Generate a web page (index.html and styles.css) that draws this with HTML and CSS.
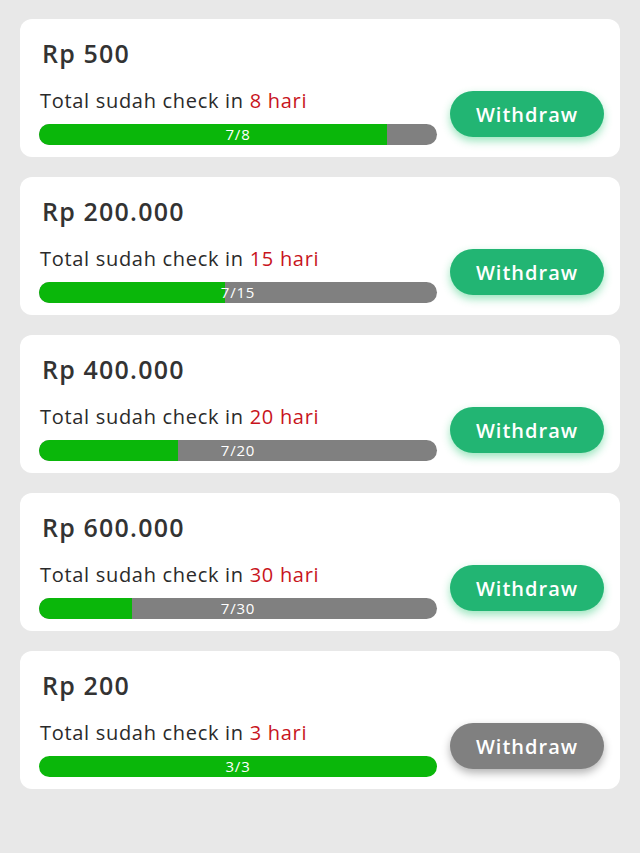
FILE: index.html
```html
<!DOCTYPE html>
<html lang="id">
<head>
    <meta charset="UTF-8">
    <meta name="viewport" content="width=device-width, initial-scale=1.0">
    <title>Check In Reward</title>
    <link rel="stylesheet" href="styles.css">
</head>
<body>
    <div class="reward-list">
        <div class="reward-card">
            <div class="reward-info">
                <div class="reward-amount">Rp 500</div>
                <div class="reward-desc">Total sudah check in <span class="days">8 hari</span></div>
                <div class="progress">
                    <div class="progress-fill" style="width: 87.5%"></div>
                    <span class="progress-text">7/8</span>
                </div>
            </div>
            <button class="withdraw-btn">Withdraw</button>
        </div>

        <div class="reward-card">
            <div class="reward-info">
                <div class="reward-amount">Rp 200.000</div>
                <div class="reward-desc">Total sudah check in <span class="days">15 hari</span></div>
                <div class="progress">
                    <div class="progress-fill" style="width: 46.67%"></div>
                    <span class="progress-text">7/15</span>
                </div>
            </div>
            <button class="withdraw-btn">Withdraw</button>
        </div>

        <div class="reward-card">
            <div class="reward-info">
                <div class="reward-amount">Rp 400.000</div>
                <div class="reward-desc">Total sudah check in <span class="days">20 hari</span></div>
                <div class="progress">
                    <div class="progress-fill" style="width: 35%"></div>
                    <span class="progress-text">7/20</span>
                </div>
            </div>
            <button class="withdraw-btn">Withdraw</button>
        </div>

        <div class="reward-card">
            <div class="reward-info">
                <div class="reward-amount">Rp 600.000</div>
                <div class="reward-desc">Total sudah check in <span class="days">30 hari</span></div>
                <div class="progress">
                    <div class="progress-fill" style="width: 23.33%"></div>
                    <span class="progress-text">7/30</span>
                </div>
            </div>
            <button class="withdraw-btn">Withdraw</button>
        </div>

        <div class="reward-card">
            <div class="reward-info">
                <div class="reward-amount">Rp 200</div>
                <div class="reward-desc">Total sudah check in <span class="days">3 hari</span></div>
                <div class="progress">
                    <div class="progress-fill" style="width: 100%"></div>
                    <span class="progress-text">3/3</span>
                </div>
            </div>
            <button class="withdraw-btn disabled">Withdraw</button>
        </div>
    </div>
</body>
</html>
```

FILE: styles.css
```css
body {
    margin: 0;
    padding: 19px 20px;
    background-color: #e8e8e8;
    font-family: 'Open Sans', 'DejaVu Sans', sans-serif;
    color: #333;
}

.reward-list {
    display: flex;
    flex-direction: column;
    gap: 20px;
}

.reward-card {
    display: flex;
    align-items: flex-end;
    height: 138px;
    box-sizing: border-box;
    padding: 0 16px 12px 19px;
    background: white;
    border-radius: 12px;
}

.reward-info {
    flex: 1;
    max-width: 398px;
}

.reward-amount {
    font-size: 25px;
    font-weight: 600;
    line-height: 30px;
    letter-spacing: 1.2px;
    margin-left: 3px;
    margin-bottom: 21px;
}

.reward-desc {
    font-size: 20px;
    line-height: 24px;
    letter-spacing: 0.7px;
    margin-left: 1px;
    margin-bottom: 11px;
    color: #2a2a2a;
}

.days {
    color: #c8141c;
}

.progress {
    position: relative;
    height: 21px;
    background: #808080;
    border-radius: 11px;
    overflow: hidden;
}

.progress-fill {
    height: 100%;
    background: #0ab70a;
}

.progress-text {
    position: absolute;
    inset: 0;
    text-align: center;
    font-size: 15px;
    line-height: 21px;
    font-weight: 500;
    letter-spacing: 0.8px;
    color: white;
}

.withdraw-btn {
    width: 154px;
    height: 46px;
    margin-left: auto;
    margin-bottom: 8px;
    border: none;
    border-radius: 23px;
    background: #22b573;
    color: white;
    font-family: inherit;
    font-size: 20px;
    font-weight: 600;
    letter-spacing: 1px;
    box-shadow: 0 4px 8px rgba(34, 197, 110, 0.45);
    cursor: pointer;
}

.withdraw-btn.disabled {
    background: #808080;
    box-shadow: 0 4px 8px rgba(0, 0, 0, 0.3);
}
```
